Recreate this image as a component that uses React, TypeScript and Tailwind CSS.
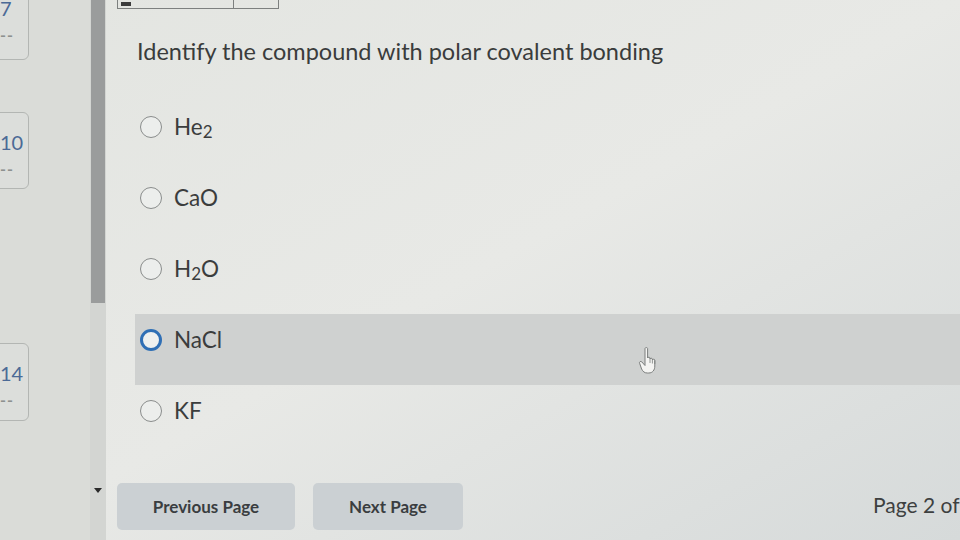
import React from "react";

function Radio({ active }: { active?: boolean }) {
  return (
    <div
      className={
        active
          ? "w-[22px] h-[22px] rounded-full border-[3px] border-[#2f6fb5] bg-[#eef0ef] shrink-0"
          : "w-[22px] h-[22px] rounded-full border-[1.5px] border-[#8a8d8c] bg-[#eceeec] shrink-0"
      }
    />
  );
}

function Option({ children, active }: { children: React.ReactNode; active?: boolean }) {
  return (
    <div
      className={
        "h-[71px] flex items-start pt-[15px] pl-[5px] " +
        (active ? "bg-[#cfd1d0]" : "")
      }
    >
      <Radio active={active} />
      <div className="ml-[12px] text-[22.5px] leading-[22px] text-[#3b3d3d] whitespace-nowrap">{children}</div>
    </div>
  );
}

function Card({ num, top, h }: { num: string; top: number; h: number }) {
  return (
    <div
      className="ml-[-34px] w-[63px] rounded-[6px] border border-[#b3b6b3] bg-[#dcdedb] flex flex-col items-start pl-[33px]"
      style={{ marginTop: top, height: h }}
    >
      <div className="text-[20px] leading-[20px] text-[#4b6a96] mt-[19px]">{num}</div>
      <div className="text-[16px] leading-[10px] text-[#8d918f] mt-[12px] tracking-[1px] font-bold">--</div>
    </div>
  );
}

function Hand() {
  return (
    <svg width="24" height="30" viewBox="0 0 24 30">
      <path
        d="M7 2.5c0-1.2 2.6-1.2 2.6 0V12c0-1 2.4-1 2.4 0v1c0-1 2.4-1 2.4 0v1c0-1 2.4-1 2.4 0v6c0 4-2.2 7-6 7h-1.5c-3 0-4.3-1.5-5.7-4L1.6 17.2c-.7-1.3 1.2-2.5 2.2-1.3L7 19.5z"
        fill="#f4f4f2"
        stroke="#7a7d7c"
        strokeWidth="1"
      />
      <path d="M12 12.5v4.5M14.4 13.5v4M16.8 14.5v3.5" stroke="#7a7d7c" strokeWidth="0.8" fill="none" />
    </svg>
  );
}

export default function App() {
  return (
    <div
      className="w-[960px] h-[540px] overflow-hidden flex bg-gradient-to-br from-[#e3e5e1] via-[#e8e9e6] to-[#d6dada]"
      style={{ fontFamily: "Lato, 'Open Sans', sans-serif" }}
    >
      {/* left question-number sidebar */}
      <div className="w-[90px] shrink-0 bg-[#dadcd8] flex flex-col">
        <Card num="7" top={-22} h={82} />
        <Card num="10" top={52} h={77} />
        <Card num="14" top={154} h={78} />
      </div>

      {/* scrollbar */}
      <div className="w-[16px] shrink-0 bg-[#d3d5d2] flex flex-col items-center relative">
        <div className="w-[14px] h-[303px] bg-[#9a9c9c]" />
        <div className="flex-1" />
        <div className="mb-[47px] w-0 h-0 border-l-[4px] border-r-[4px] border-t-[5px] border-l-transparent border-r-transparent border-t-[#2a2a2a]" />
      </div>

      {/* main */}
      <div className="flex-1 flex flex-col relative">
        <div className="ml-[11px] w-[162px] h-[9px] border border-t-0 border-[#7d807f] flex">
          <div className="w-[116px] border-r border-[#7d807f] pl-[3px]">
            <div className="w-[10px] h-[4px] bg-[#3c3c3c] mt-[2px]" />
          </div>
        </div>

        <div className="ml-[31px] mt-[27px] text-[23.5px] leading-[30px] text-[#3a3c3c] whitespace-nowrap">
          Identify the compound with polar covalent bonding
        </div>

        <div className="ml-[29px] mt-[35px] flex flex-col">
          <Option>
            He<sub className="text-[17px] relative top-[3px]">2</sub>
          </Option>
          <Option>CaO</Option>
          <Option>
            H<sub className="text-[17px] relative top-[3px]">2</sub>O
          </Option>
          <Option active>NaCl</Option>
          <Option>KF</Option>
        </div>

        <div className="ml-[11px] mt-[27px] flex items-center">
          <div className="w-[178px] h-[47px] rounded-[5px] bg-[#cbd0d3] flex items-center justify-center text-[17px] font-bold text-[#3a3d40]">
            Previous Page
          </div>
          <div className="ml-[18px] w-[150px] h-[47px] rounded-[5px] bg-[#cbd0d3] flex items-center justify-center text-[17px] font-bold text-[#3a3d40]">
            Next Page
          </div>
          <div className="ml-[410px] text-[21px] text-[#3d4040] whitespace-nowrap mt-[-4px]">
            Page 2 of 3
          </div>
        </div>

        <div className="absolute left-[532px] top-[346px]">
          <Hand />
        </div>
      </div>
    </div>
  );
}
